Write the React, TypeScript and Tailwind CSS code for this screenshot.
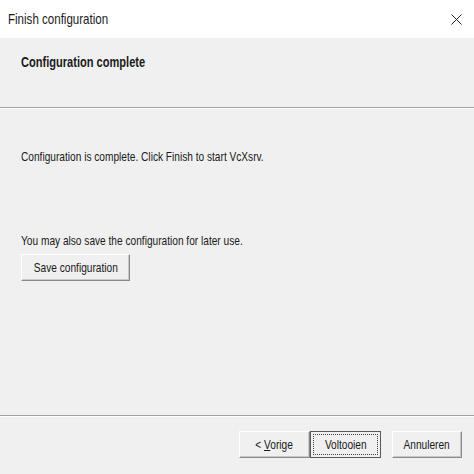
import React from "react";

const font = {
  fontFamily: '"Liberation Sans", Arial, sans-serif',
};

function ClassicButton({
  children,
  className = "",
  isDefault = false,
}: {
  children: React.ReactNode;
  className?: string;
  isDefault?: boolean;
}) {
  const label = (
    <span className="inline-block origin-center scale-x-[0.78] whitespace-nowrap">{children}</span>
  );
  if (isDefault) {
    return (
      <button
        className={`flex items-center justify-center border border-[#5a5a5a] bg-[#f0f0f0] p-[2px] text-[13px] text-[#1a1a1a] ${className}`}
      >
        <span className="flex h-full w-full items-center justify-center border border-dotted border-[#404040]">
          {label}
        </span>
      </button>
    );
  }
  return (
    <button
      className={`flex items-center justify-center border border-t-white border-l-white border-b-[#8a8a8a] border-r-[#8a8a8a] bg-[#f0f0f0] text-[13px] text-[#1a1a1a] shadow-[inset_-1px_-1px_0_#c8c8c8] ${className}`}
    >
      {label}
    </button>
  );
}

export default function App() {
  return (
    <div
      className="flex h-[474px] w-[474px] flex-col overflow-hidden bg-[#f0f0f0] text-[#1a1a1a]"
      style={font}
    >
      {/* title bar */}
      <div className="flex h-[38px] shrink-0 items-center justify-between bg-white pl-[8px] pr-[12px]">
        <span className="inline-block origin-left scale-x-[0.77] whitespace-nowrap text-[15px] text-[#1a1a1a]">
          Finish configuration
        </span>
        <svg width="11" height="11" viewBox="0 0 11 11" className="mt-[1px]">
          <path d="M0.5 0.5 L10.5 10.5 M10.5 0.5 L0.5 10.5" stroke="#222" strokeWidth="1" />
        </svg>
      </div>

      {/* header */}
      <div className="h-[69px] shrink-0 pl-[21px] pt-[12px]">
        <span className="inline-block origin-left scale-x-[0.79] whitespace-nowrap text-[14px] font-bold">
          Configuration complete
        </span>
      </div>
      <div className="h-[2px] shrink-0 border-t border-t-[#a0a0a0] border-b border-b-white" />

      {/* body */}
      <div className="flex flex-1 flex-col items-start pl-[21px] pt-[40px]">
        <p className="origin-left scale-x-[0.78] whitespace-nowrap text-[13px] leading-[16px]">
          Configuration is complete. Click Finish to start VcXsrv.
        </p>
        <p className="mt-[68px] origin-left scale-x-[0.78] whitespace-nowrap text-[13px] leading-[16px]">
          You may also save the configuration for later use.
        </p>
        <ClassicButton className="mt-[5px] h-[27px] w-[109px]">
          Save configuration
        </ClassicButton>
      </div>

      <div className="h-[2px] shrink-0 border-t border-t-[#a0a0a0] border-b border-b-white" />

      {/* footer */}
      <div className="flex h-[57px] shrink-0 items-start justify-end pr-[12px] pt-[14px]">
        <ClassicButton className="h-[27px] w-[71px]">
          &lt; <span className="underline">V</span>orige
        </ClassicButton>
        <ClassicButton isDefault className="h-[27px] w-[71px]">
          Voltooien
        </ClassicButton>
        <ClassicButton className="ml-[11px] h-[27px] w-[70px]">
          Annuleren
        </ClassicButton>
      </div>
    </div>
  );
}
